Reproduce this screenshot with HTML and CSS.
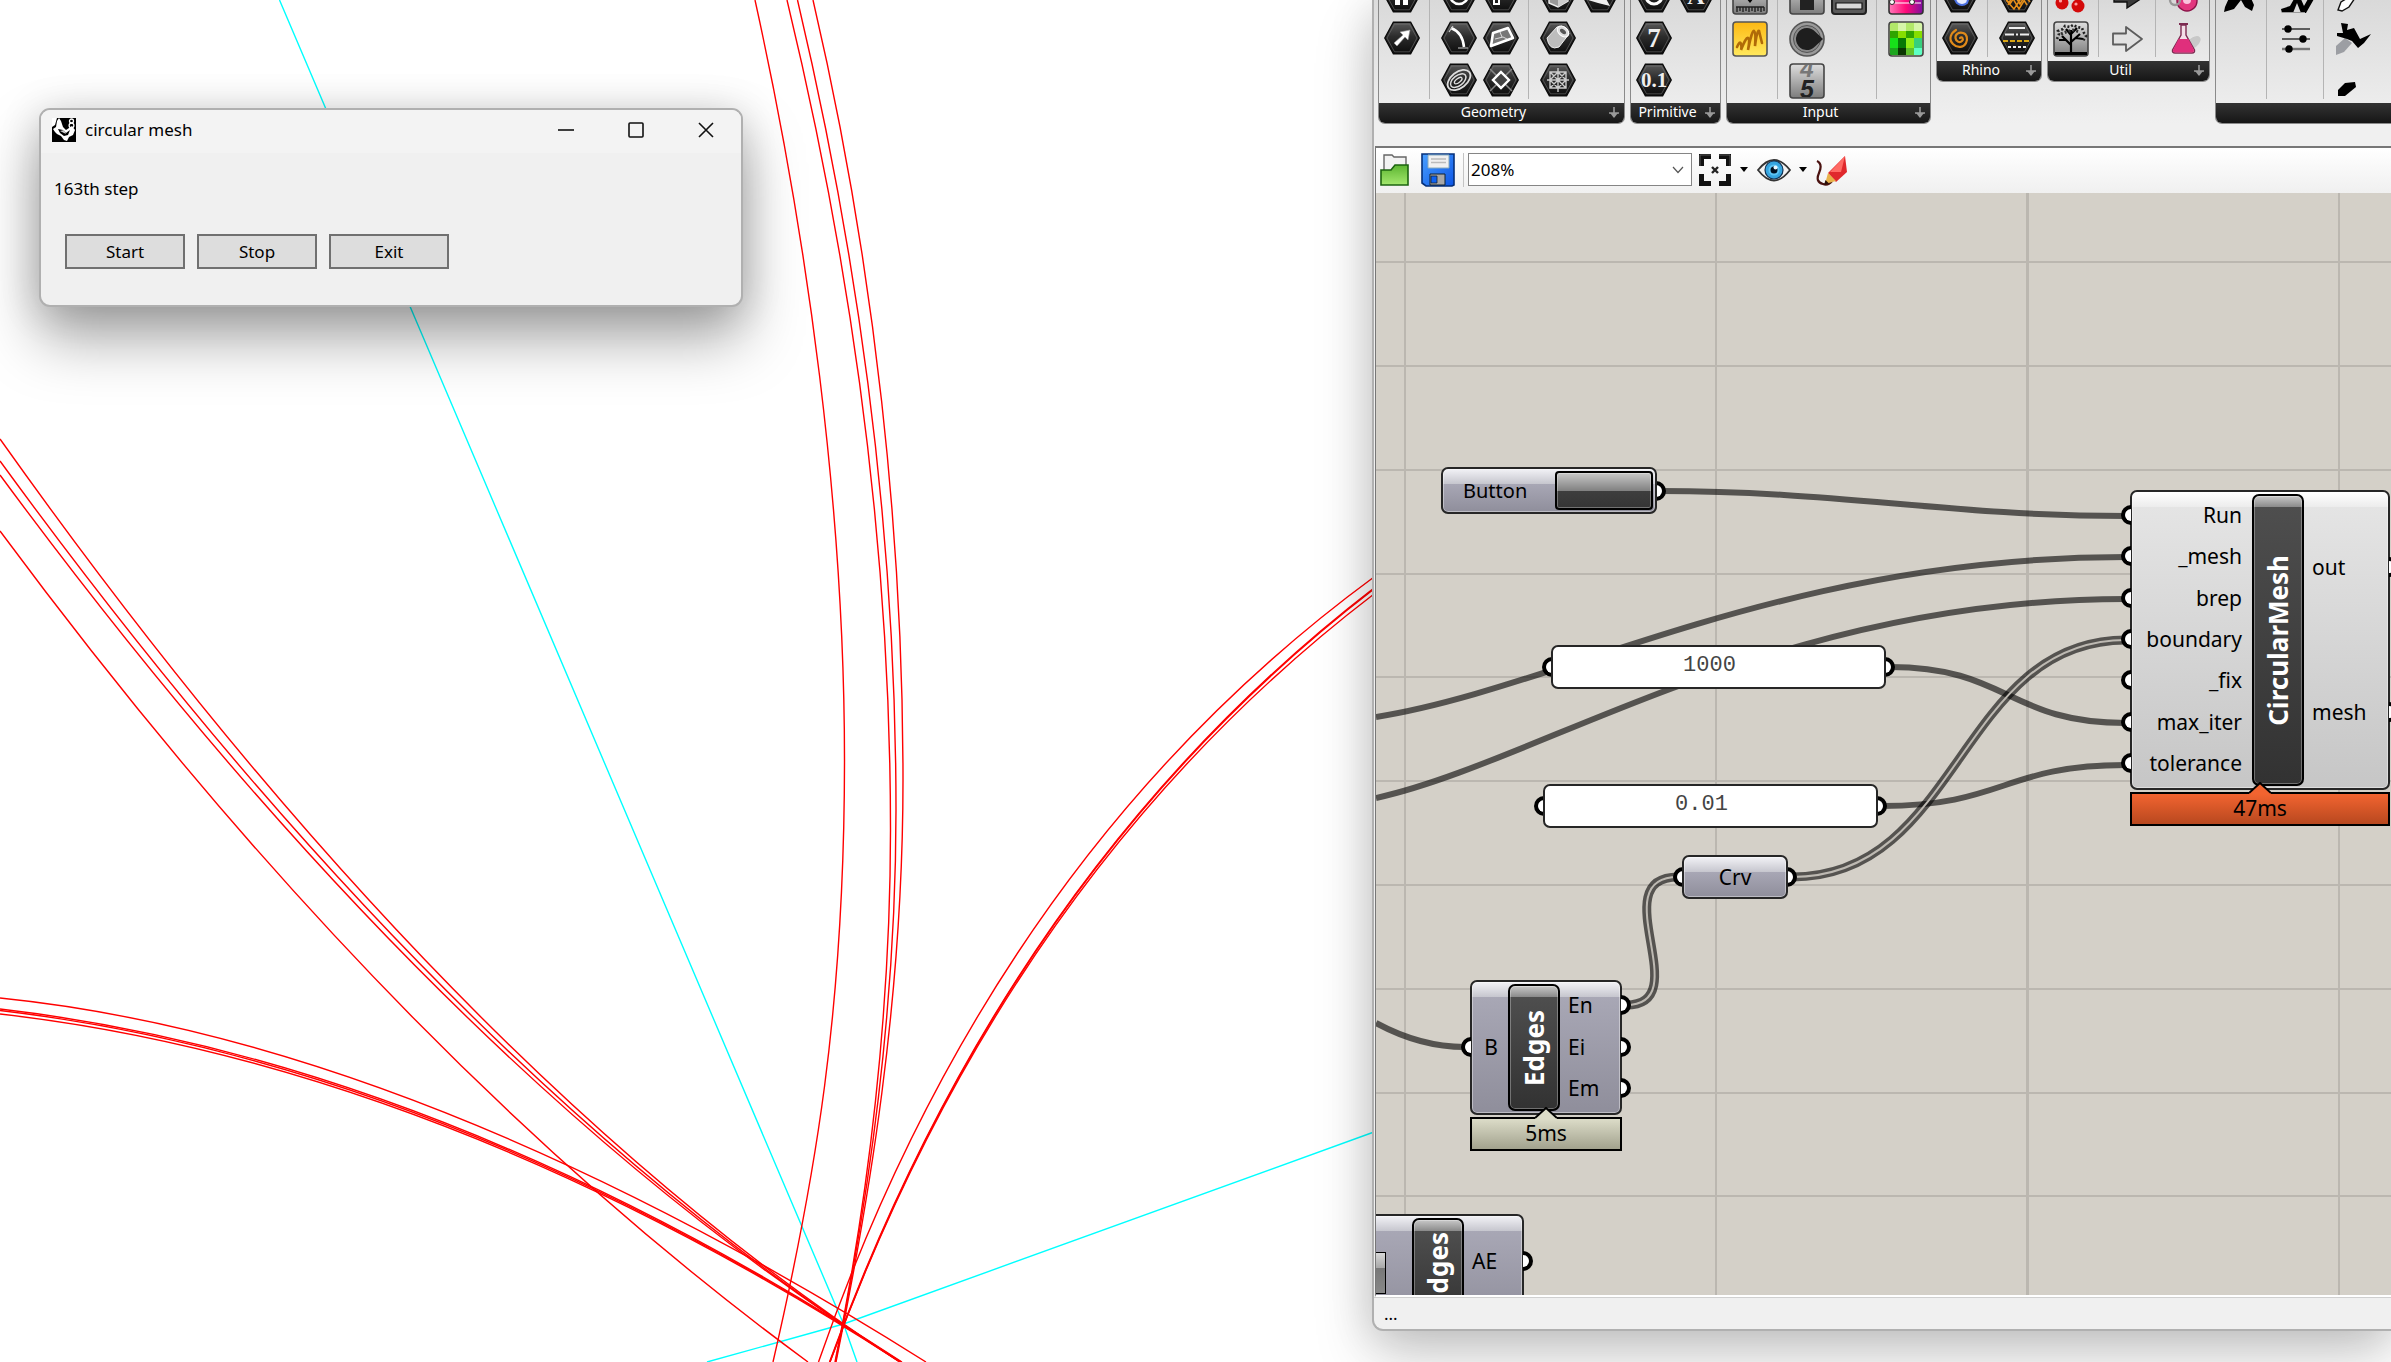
FILE: index.html
```html
<!DOCTYPE html>
<html lang="en">
<head>
<meta charset="utf-8">
<title>circular mesh</title>
<link rel="stylesheet" href="styles.css">
</head>
<body>
<svg class="defs" width="0" height="0" aria-hidden="true">
  <defs>
    <linearGradient id="gHex" x1="0" y1="0" x2="0" y2="1"><stop offset="0" stop-color="#5a5a5a"/><stop offset=".45" stop-color="#2c2c2c"/><stop offset="1" stop-color="#0c0c0c"/></linearGradient>
    <linearGradient id="gSteel" x1="0" y1="0" x2="0" y2="1"><stop offset="0" stop-color="#dedede"/><stop offset="1" stop-color="#7c7c7c"/></linearGradient>
    <linearGradient id="gYellow" x1="0" y1="0" x2="0" y2="1"><stop offset="0" stop-color="#fdb813"/><stop offset="1" stop-color="#ffe95e"/></linearGradient>
    <linearGradient id="gPink" x1="0" y1="0" x2="1" y2="0"><stop offset="0" stop-color="#ff7ab8"/><stop offset=".5" stop-color="#ff0a78"/><stop offset="1" stop-color="#7a10a0"/></linearGradient>
    <linearGradient id="gGreen" x1="0" y1="0" x2="0" y2="1"><stop offset="0" stop-color="#5cb531"/><stop offset="1" stop-color="#a4e86e"/></linearGradient>
    <linearGradient id="gBlue" x1="0" y1="0" x2="1" y2="1"><stop offset="0" stop-color="#4aa0ff"/><stop offset="1" stop-color="#0c55e6"/></linearGradient>
    <symbol id="hex" viewBox="0 0 36 36">
      <path d="M.8 17 9.400 1.200H26.600L35.200 17 26.600 32.800H9.400Z" fill="url(#gHex)" stroke="#0b0b0b" stroke-width="1.400"/>
      <path d="M3 17 10.500 3.200H25.500L33 17 25.500 30.800H10.500Z" fill="none" stroke="#777" stroke-opacity=".55" stroke-width="1"/>
    </symbol>
    <symbol id="more" viewBox="0 0 12 12"><path d="M6 0V10M1 6H11" stroke="#999" stroke-width="1.600"/><path d="M2 6H10L6 11Z" fill="#999"/></symbol>
  </defs>
</svg>

<main class="desktop">
  <svg class="viewport" aria-hidden="true">
    <g class="guide">
      <path d="M279.500 0 843.500 1324 857 1362"/>
      <path d="M707 1362 843.500 1324 1374 1132"/>
    </g>
    <g class="mesh">
      <path d="M0 439Q445 1066 900 1362"/><path d="M0 461Q445 1072 900 1362"/><path d="M0 475Q445 1078 901 1362"/><path d="M0 531Q386 1052 808 1362"/>
      <path d="M0 998Q414 1040 926 1362"/><path d="M0 1009Q438 1060 902 1362"/><path d="M0 1010.500Q438 1062 901 1362"/><path d="M0 1014Q438 1064 900 1362"/>
      <path d="M755 0C808 240 844.500 510 844.500 760S815 1180 773 1362"/>
      <path d="M787 0C857 290 890.500 570 890.500 830C890.500 1010 869 1195 835 1362"/>
      <path d="M797.500 0C866 290 896 560 896 810C896 1010 869 1195 835.500 1362"/>
      <path d="M813 0C876 270 903 540 903 780C903 1000 869 1200 836 1362"/>
      <path d="M818.500 1362Q994 856 1374 577"/><path d="M829.500 1362Q1009 869 1374 588"/><path d="M830 1362Q1009 870 1374 589"/><path d="M830 1362Q1009 873 1374 594"/>
    </g>
  </svg>

  <section class="window dialog" aria-label="circular mesh">
    <header class="titlebar">
      <svg class="app-icon" viewBox="0 0 24 24" aria-hidden="true"><path fill="#000" d="M0 0h24v24H0z"/><path fill="#fff" d="M1 11 4 9 5 3 7 0 9 3 11 9 14 12 20 8 23 12 21 17 17 19 15 23 12 22 9 18 5 16 3 14Z"/><path fill="#000" d="M6 11 11 12 14 15 18 12 16 17 12 18 8 15Z"/><path fill="#ccc" d="m8 13 4-1 2 4z"/><path fill="#fff" d="M0 0h5L3 7 0 9z"/><g fill="none" stroke="#fff" stroke-width="1.300"><circle cx="19.500" cy="3" r="2"/><circle cx="19.500" cy="7.500" r="2.400"/></g></svg>
      <h1 class="title">circular mesh</h1>
      <button class="caption" type="button" aria-label="Minimize"><svg viewBox="0 0 16 16"><path d="M0 8H16"/></svg></button>
      <button class="caption" type="button" aria-label="Maximize"><svg viewBox="0 0 16 16"><rect x="1" y="1" width="14" height="14" rx="1"/></svg></button>
      <button class="caption" type="button" aria-label="Close"><svg viewBox="0 0 16 16"><path d="M1 1 15 15M15 1 1 15"/></svg></button>
    </header>
    <div class="dialog-body">
      <p class="step">163th step</p>
      <div class="actions">
        <button class="push" type="button">Start</button>
        <button class="push" type="button">Stop</button>
        <button class="push" type="button">Exit</button>
      </div>
    </div>
  </section>

  <section class="window editor" aria-label="Grasshopper">
    <div class="ribbon">
      <section class="panel">
        <div class="tools">
          <div class="group">
            <svg viewBox="0 0 36 36"><use href="#hex"/><path d="M11 21h5v5h-5zM19 21h5v5h-5z" fill="#fff"/></svg>
            <svg viewBox="0 0 36 36"><use href="#hex"/><path d="m10 22 9-8-3-3 10-2-2 10-3-3-8 9Z" fill="#fff" stroke="#999" stroke-width=".6"/></svg>
            <span></span>
          </div>
          <div class="group two">
            <svg viewBox="0 0 36 36"><use href="#hex"/><circle cx="18" cy="16" r="9" fill="none" stroke="#fff" stroke-width="2.500"/></svg>
            <svg viewBox="0 0 36 36"><use href="#hex"/><path d="M11 20h5v5h-5zM14 20 20 8" fill="none" stroke="#fff" stroke-width="2"/></svg>
            <svg viewBox="0 0 36 36"><use href="#hex"/><path d="M10 7C18 10 22 16 23 26" fill="none" stroke="#fff" stroke-width="2.600"/><path d="M17 27H27M8 11 12 5" stroke="#ccc" stroke-width="1.200"/></svg>
            <svg viewBox="0 0 36 36"><use href="#hex"/><path d="M10 12 25 7 30 17 8 25Z" fill="#777" stroke="#fff" stroke-width="2.600" stroke-linejoin="round"/><path d="m17 11 2 5M12 18l8-2 4 2" fill="none" stroke="#ddd"/></svg>
            <svg viewBox="0 0 36 36"><use href="#hex"/><g fill="none" stroke="#ddd" transform="rotate(-38 18 17)"><ellipse cx="18" cy="17" rx="13" ry="8" stroke-width="1.800"/><ellipse cx="17" cy="17" rx="9" ry="5" stroke-width="1.500"/><ellipse cx="17" cy="17" rx="4.500" ry="2" stroke-width="1.400"/></g></svg>
            <svg viewBox="0 0 36 36"><use href="#hex"/><path d="M7 6 29 28M29 6 7 28" stroke="#888" stroke-width="1.500"/><path d="M18 9 26 17 18 25 10 17Z" fill="#444" stroke="#fff" stroke-width="2.400"/></svg>
          </div>
          <div class="group two">
            <svg viewBox="0 0 36 36"><use href="#hex"/><path d="M9 10 18 13 28 9V22L18 28 9 24Z" fill="#999" stroke="#eee" stroke-width="1.400"/><path d="M18 13V28L28 22V9Z" fill="#ccc"/></svg>
            <svg viewBox="0 0 36 36"><use href="#hex"/><path d="M6 21 22 16 28 27 16 24Z" fill="#eee"/></svg>
            <svg viewBox="0 0 36 36"><use href="#hex"/><path d="M7 17 17 6Q27 3 29 13L19 26Q9 30 7 17Z" fill="#bdbdbd" stroke="#eee"/><ellipse cx="23" cy="10.500" rx="6.500" ry="4.500" fill="#ddd" stroke="#fff" transform="rotate(40 23 10.500)"/><ellipse cx="23" cy="10.500" rx="3.500" ry="2" fill="#555" transform="rotate(40 23 10.500)"/></svg>
            <span></span>
            <svg viewBox="0 0 36 36"><use href="#hex"/><g fill="none" stroke="#ccc" stroke-width="1.400"><path d="M10 9h16v16H10zM18 5v24M7 17h22M10 9 26 25M26 9 10 25M18 9 26 17 18 25 10 17Z"/></g></svg>
            <span></span>
          </div>
        </div>
        <footer class="caption-bar"><h2>Geometry</h2><svg><use href="#more"/></svg></footer>
      </section>

      <section class="panel">
        <div class="tools">
          <div class="group two">
            <svg viewBox="0 0 36 36"><use href="#hex"/><circle cx="18" cy="17" r="8" fill="none" stroke="#fff" stroke-width="3"/></svg>
            <svg viewBox="0 0 36 36"><use href="#hex"/><text class="glyph" x="18" y="25" font-size="24">A</text></svg>
            <svg viewBox="0 0 36 36"><use href="#hex"/><text class="glyph" x="18" y="26" font-size="27">7</text></svg>
            <span></span>
            <svg viewBox="0 0 36 36"><use href="#hex"/><text class="glyph" x="18" y="24" font-size="21">0.1</text></svg>
            <span></span>
          </div>
        </div>
        <footer class="caption-bar"><h2>Primitive</h2><svg><use href="#more"/></svg></footer>
      </section>

      <section class="panel">
        <div class="tools">
          <div class="group">
            <svg viewBox="0 0 36 36"><rect x="1" y="1" width="34" height="34" rx="3" fill="url(#gSteel)" stroke="#444" stroke-width="1.600"/><path d="M14 19 18 24 22 19Z"/><path d="M4 28H32M5 28v5M8 28v4M11 28v5M14 28v4M17 28v5M20 28v4M23 28v5M26 28v4M29 28v5M32 28v4" stroke="#222" stroke-width="1.400"/></svg>
            <svg viewBox="0 0 36 36"><rect x="1" y="1" width="34" height="34" rx="3" fill="url(#gYellow)" stroke="#555" stroke-width="1.600"/><path d="M5 26Q8 19 9 23T9 29Q14 16 16 17T16 29Q20 9 22 10T23 25Q25 9 27 10L30 22" fill="none" stroke="#b06a08" stroke-width="2.600" stroke-linecap="round"/></svg>
            <span></span>
          </div>
          <div class="group two">
            <svg viewBox="0 0 36 36"><rect x="1" y="1" width="34" height="34" rx="3" fill="url(#gSteel)" stroke="#444" stroke-width="1.600"/><path d="M11 10H25V31H11Z" fill="#222"/></svg>
            <svg viewBox="0 0 36 36"><rect x="1" y="1" width="34" height="34" rx="3" fill="#5a5a5a" stroke="#222" stroke-width="2"/><path d="M5 15H31V20H5ZM5 24H31V30H5Z" fill="#d8d8d8" stroke="#111" stroke-width="1.200"/></svg>
            <svg viewBox="0 0 36 36"><circle cx="18" cy="18" r="17" fill="#9a9a9a" stroke="#555" stroke-width="1.600"/><circle cx="18" cy="18" r="13.500" fill="#8a8a8a" stroke="#555"/><path d="M18 7A11 11 0 1 0 26 25.500L34 18 26 10.500A11 11 0 0 0 18 7Z" fill="#1e1e1e"/></svg>
            <span></span>
            <svg viewBox="0 0 36 36"><rect x="1" y="1" width="34" height="34" rx="3" fill="url(#gSteel)" stroke="#444" stroke-width="1.600"/><clipPath id="cDigit"><rect x="2" y="2" width="32" height="32"/></clipPath><g clip-path="url(#cDigit)"><text class="digit" x="18" y="14" font-size="24" fill="#777">4</text><text class="digit" x="18" y="35" font-size="25" fill="#222">5</text></g></svg>
            <span></span>
          </div>
          <div class="group">
            <svg viewBox="0 0 36 36"><rect x="1" y="1" width="34" height="34" rx="3" fill="url(#gPink)" stroke="#333" stroke-width="1.600"/><path d="M3 24H33" stroke="#fff"/><circle cx="4" cy="23" r="2.500" fill="#fff" stroke="#222"/><circle cx="24" cy="23" r="2.500" fill="#fff" stroke="#222"/></svg>
            <svg viewBox="0 0 36 36"><path d="M1 1h34v34H1z" fill="#d6f5a8"/><path fill="#8ddb2a" d="M18 2h8v8h-8zM2 2h8v8H2z" opacity=".5"/><path fill="#2fa400" d="M2 10h8v7H2zM18 10h8v7h-8z"/><path fill="#86de00" d="M10 10h8v7h-8zM26 10h8v7h-8z"/><path fill="#17e01a" d="M2 17h8v10H2z"/><path fill="#077a06" d="M10 17h8v10h-8z"/><path fill="#91ee18" d="M18 17h8v10h-8z"/><path fill="#37cf7d" d="M26 17h8v10h-8z"/><path fill="#1da51e" d="M2 27h8v7H2z"/><path fill="#0a3602" d="M10 27h8v7h-8z"/><path fill="#5fc22c" d="M18 27h8v7h-8z"/><path fill="#5effc4" d="M26 27h8v7h-8z"/><rect x="1" y="1" width="34" height="34" rx="3" fill="none" stroke="#444" stroke-width="1.600"/></svg>
            <span></span>
          </div>
        </div>
        <footer class="caption-bar"><h2>Input</h2><svg><use href="#more"/></svg></footer>
      </section>

      <section class="panel">
        <div class="tools">
          <div class="group">
            <svg viewBox="0 0 36 36"><use href="#hex"/><path d="M8 12 15 24Q20 28 25 24L28 15 18 6Z" fill="#e8ecff" stroke="#4a6fe0" stroke-width="2"/></svg>
            <svg viewBox="0 0 36 36"><use href="#hex"/><path d="M18 17C20 15 22 18 20 20S14 21 13.500 17 17 11 21 12 26 18 24 22 16 28 11 23 9 12 14 9" fill="none" stroke="#e08a1a" stroke-width="2.200" stroke-linecap="round"/></svg>
          </div>
          <div class="group">
            <svg viewBox="0 0 36 36"><use href="#hex"/><path d="m6 19 5 6 5-8 5 8 5-8 5 6M9 26l4-8 7 12 8-13M7 21 15 30 23 18 28 26" fill="none" stroke="#e8901a" stroke-width="1.500"/></svg>
            <svg viewBox="0 0 36 36"><use href="#hex"/><path d="M10 7H26" stroke="#eee" stroke-width="1.800"/><path d="M6 13.500H31" stroke="#eee" stroke-width="1.800" stroke-dasharray="9 2 2 2"/><path d="M4 20H32" stroke="#d9a514" stroke-width="2" stroke-dasharray="5 2"/><path d="M9 26H28" stroke="#eee" stroke-width="1.800" stroke-dasharray="3 2"/></svg>
          </div>
        </div>
        <footer class="caption-bar"><h2>Rhino</h2><svg><use href="#more"/></svg></footer>
      </section>

      <section class="panel">
        <div class="tools">
          <div class="group">
            <svg viewBox="0 0 36 36"><path d="M18 2Q8 12 10 22M18 2Q24 12 25 24" fill="none" stroke="#486b1e" stroke-width="2"/><circle cx="9" cy="24" r="6.500" fill="#d40a0a"/><circle cx="25" cy="27" r="6.500" fill="#d40a0a"/><circle cx="7.500" cy="22" r="1.600" fill="#ffa0a0"/><circle cx="23" cy="25" r="1.600" fill="#ffa0a0"/></svg>
            <svg viewBox="0 0 36 36"><rect x="1" y="1" width="34" height="34" rx="3" fill="url(#gSteel)" stroke="#444" stroke-width="1.600"/><path d="M2 31H34V34H2Z"/><path d="M18 32V20M18 24 9 15M18 21 27 13M18 20V9M13 19 6 19M23 17 30 18M18 14 13 8M18 13 24 7" stroke="#000" stroke-width="2.200"/><path d="M4 18 6 13 5 10 10 8 12 5 17 6 20 4 24 6 29 7 31 12 33 15 30 20" fill="none" stroke="#222" stroke-width="2.600" stroke-dasharray="2 2"/><path d="M8 13 13 11 20 9 27 11" stroke="#333" fill="none" stroke-width="3" stroke-dasharray="2 2"/></svg>
          </div>
          <div class="group">
            <svg viewBox="0 0 36 36"><path d="M4 14H17V8L32 19 17 29V23H4Z" fill="#3a3a3a" stroke="#111" stroke-width="1.400"/></svg>
            <svg viewBox="0 0 36 36"><path d="M3 12.500H16V6L32 18 16 30V23.500H3Z" fill="#e2e2e2" stroke="#5d5d5d" stroke-width="1.800" stroke-linejoin="round"/></svg>
          </div>
          <div class="group">
            <svg viewBox="0 0 36 36"><circle cx="20" cy="22" r="10" fill="#e2367e" stroke="#8c1248" stroke-width="1.400"/><circle cx="8" cy="21" r="5" fill="none" stroke="#999" stroke-width="2.400"/><circle cx="20" cy="21" r="4" fill="#f9c4dc"/></svg>
            <svg viewBox="0 0 36 36"><ellipse cx="26" cy="22" rx="9" ry="5" fill="#000" opacity=".12" transform="rotate(-40 26 22)"/><path d="M14 4V14L5.500 29Q5 32 8 32H25Q28 32 27.500 29L19 14V4Z" fill="#f3dfe8" stroke="#7c2a50" stroke-width="1.400"/><path d="M11.500 18H21.500L27 29Q27 31.500 25 31.500H8Q5.500 31.500 6 29Z" fill="#e02f7c"/><path d="M12 3H21" stroke="#7c2a50" stroke-width="2"/></svg>
          </div>
        </div>
        <footer class="caption-bar"><h2>Util</h2><svg><use href="#more"/></svg></footer>
      </section>

      <section class="panel last">
        <div class="tools">
          <div class="group">
            <svg viewBox="0 0 36 36"><path d="M12 10 19 20 26 10 33 26 31 32 24 28 20 21 13 30 3 33 4 28Z"/></svg>
            <span></span><span></span>
          </div>
          <div class="group">
            <svg viewBox="0 0 36 36"><path d="M8 20 16 20 12 27 3 30 4 34H15L19 24 23 34H28L36 20 30 20 26 27 22 18Z"/><path d="M4 33.500H27" stroke="#999"/></svg>
            <svg viewBox="0 0 36 36"><path d="M4 8H32M4 18H32" stroke="#333" stroke-width="1.400"/><path d="M4 28H32" stroke="#777" stroke-width="2.400"/><circle cx="10" cy="8" r="3.700"/><circle cx="25" cy="18" r="3.700"/><circle cx="11" cy="28" r="3.700"/></svg>
            <span></span>
          </div>
          <div class="group">
            <svg viewBox="0 0 36 36"><path d="M3 31 6 23 14 18 20 19 14 28 7 32Z" fill="#fff" stroke="#111" stroke-width="1.400"/></svg>
            <svg viewBox="0 0 36 36"><path d="M1 25 10 17 17 22 9 31 1 34Z" fill="#9c9ea3"/><path d="M6 2 13 3 12 9 19 7 25 18 36 13 29 22 23 27 17 20 12 18 2 15 2 12 8 12Z"/></svg>
            <svg viewBox="0 0 36 36"><path d="M3 33 3 27 10 20 20 19 21 24 10 33Z"/></svg>
          </div>
        </div>
        <footer class="caption-bar"></footer>
      </section>
    </div>

    <div class="workspace">
      <div class="toolbar">
        <button class="tool" type="button" aria-label="Open"><svg viewBox="0 0 34 34"><path d="M5 2H13L15 4H27V20H5Z" fill="#f2f2f2" stroke="#666" stroke-width="1.400"/><path d="M2 17H12L16 12H29V32H2Z" fill="url(#gGreen)" stroke="#1c6410" stroke-width="1.600"/></svg></button>
        <button class="tool" type="button" aria-label="Save"><svg viewBox="0 0 34 34"><path d="M1 1H33V32L31 33H5L1 30Z" fill="url(#gBlue)" stroke="#06307a" stroke-width="1.600"/><path d="M7 2H28V15H7Z" fill="#f0f0f0" stroke="#8ab"/><path d="M10 6H25M10 9.500H25" stroke="#bbb" stroke-width="1.500"/><path d="M9 21H24V32H9Z" fill="#a8a8a8" stroke="#123"/><path d="M10 23H16V30H10Z" fill="#0f62f0" stroke="#123" stroke-width=".8"/></svg></button>
        <span class="divider"></span>
        <div class="zoom">
          <select aria-label="Zoom"><option>208%</option></select>
          <svg viewBox="0 0 12 8" aria-hidden="true"><path d="M1 1 6 6.500 11 1" fill="none" stroke="#555" stroke-width="1.200"/></svg>
        </div>
        <button class="tool" type="button" aria-label="Zoom extents"><svg viewBox="0 0 34 34"><path d="M3.500 13V3.500H13M21 3.500H30.500V13M30.500 21V30.500H21M13 30.500H3.500V21" fill="none" stroke="#111" stroke-width="5"/><path d="M2 13V2H13M21 2H32V13" fill="none" stroke="#666" stroke-width=".8"/><path d="M14 14 20 20M20 14 14 20" stroke="#222" stroke-width="2.400"/></svg></button>
        <svg class="drop" viewBox="0 0 8 5"><path d="M0 0H8L4 5Z"/></svg>
        <button class="tool" type="button" aria-label="Preview"><svg viewBox="0 0 34 34"><path d="M1 17Q17 -3 33 17Q17 38 1 17Z" fill="#f2f2f2" stroke="#333" stroke-width="1.800"/><circle cx="17" cy="17" r="9" fill="#35a5e0" stroke="#135" stroke-width="1.200"/><circle cx="17" cy="17" r="5.500" fill="#5cc4f4"/><circle cx="17" cy="17" r="3.500" fill="#012"/><circle cx="18.500" cy="14.500" r="2" fill="#e8f8ff"/></svg></button>
        <svg class="drop" viewBox="0 0 8 5"><path d="M0 0H8L4 5Z"/></svg>
        <button class="tool" type="button" aria-label="Sketch"><svg viewBox="0 0 34 34"><path d="M1 8Q7 11 3 20T7 31Q12 33 16 28" fill="none" stroke="#4a1210" stroke-width="2.200"/><path d="M12 20 29 3 31 19 20 29Z" fill="#e0282c"/><path d="M14 19 29 3 25 19Z" fill="#ff6a64"/><path d="M9 31 12 20 20 28Z" fill="#e8b24a"/><path d="M8 32 9.500 27 13 30.500Z" fill="#2a1008"/></svg></button>
      </div>

      <div class="canvas">
        <svg class="wires" aria-hidden="true">
          <g transform="translate(-1376 -193)">
            <g class="grid">
              <path d="M1405 193V1400M1716 193V1400M2339 193V1400"/><path class="major" d="M2027.500 193V1400"/>
              <path d="M1376 262H2600M1376 366H2600M1376 470H2600M1376 574H2600M1376 677H2600M1376 781H2600M1376 885H2600M1376 989H2600M1376 1093H2600M1376 1196H2600"/>
            </g>
            <g class="wire">
              <path d="M1660 491C1840 491 1948 516 2126 516"/>
              <path d="M1376 717C1560 688 1780 557 2126 557"/>
              <path d="M1376 798C1540 762 1775 599 2126 599"/>
              <path d="M1890 667C2008 667 2008 723 2126 723"/>
              <path d="M1882 806C2004 806 2004 765 2126 765"/>
              <path d="M1376 1023C1400 1036 1430 1047 1465 1047"/>
            </g>
            <g class="wire double">
              <path d="M1626 1005C1698 1005 1602 877 1678 877"/>
              <path d="M1792 877C1960 877 1959 640 2126 640"/>
            </g>
            <g class="core">
              <path d="M1626 1005C1698 1005 1602 877 1678 877"/>
              <path d="M1792 877C1960 877 1959 640 2126 640"/>
            </g>
          </g>
        </svg>

        <div class="node n-button">
          <i class="grip out"></i>
          <div class="face toggle"><span>Button</span><button class="press" type="button" aria-label="Button"></button></div>
        </div>

        <div class="node n-iter"><i class="grip in"></i><i class="grip out"></i><div class="face note">1000</div></div>
        <div class="node n-tol"><i class="grip in"></i><i class="grip out"></i><div class="face note">0.01</div></div>
        <div class="node n-crv"><i class="grip in"></i><i class="grip out"></i><div class="face param">Crv</div></div>

        <div class="node n-mesh">
          <div class="face light">
            <ul class="ports left"><li>Run</li><li>_mesh</li><li>brep</li><li>boundary</li><li>_fix</li><li>max_iter</li><li>tolerance</li></ul>
            <div class="name"><span>CircularMesh</span></div>
            <ul class="ports right"><li>out</li><li>mesh</li></ul>
          </div>
          <div class="timer slow"><svg viewBox="0 0 22 12"><path d="M0 11 11 1 22 11V12H0Z"/><path class="edge" d="M0 11 11 1 22 11"/></svg>47ms</div>
        </div>

        <div class="node n-edges">
          <div class="face">
            <ul class="ports left"><li>B</li></ul>
            <div class="name"><span>Edges</span></div>
            <ul class="ports right"><li>En</li><li>Ei</li><li>Em</li></ul>
          </div>
          <div class="timer"><svg viewBox="0 0 22 12"><path d="M0 11 11 1 22 11V12H0Z"/><path class="edge" d="M0 11 11 1 22 11"/></svg>5ms</div>
        </div>

        <div class="node n-angle">
          <div class="face">
            <div class="swatch"></div>
            <div class="name"><span>Edges</span></div>
            <ul class="ports right"><li>AE</li></ul>
          </div>
        </div>
      </div>
    </div>
    <footer class="status">...</footer>
  </section>
</main>
</body>
</html>
```
FILE: styles.css
```css
*, *::after { box-sizing: border-box; }

body {
  margin: 0;
  background: #fff;
  color: #000;
  font: 17px/24px "Noto Sans", "Open Sans", sans-serif;
}

h1, h2, p, ul { margin: 0; padding: 0; font-weight: 400; list-style: none; }
button, select { font: inherit; color: inherit; }
.defs { position: absolute; }

.desktop {
  position: relative;
  height: 100vh;
  overflow: hidden;
}

.viewport { display: block; width: 100%; height: 100%; }
.viewport path { fill: none; stroke-width: 1.4; }
.mesh { stroke: #f00; }
.guide { stroke: #0ff; }

.window {
  position: absolute;
  background: #f0f0f0;
}

/* progress dialog */
.dialog {
  left: 39px;
  top: 108px;
  width: 704px;
  border: 2px solid #b0b0b0;
  border-radius: 11px;
  box-shadow: 0 32px 60px rgba(0, 0, 0, .34), 0 4px 40px rgba(0, 0, 0, .16);
}

.titlebar {
  display: flex;
  align-items: center;
  height: 43px;
  padding: 0 0 3px 11px;
  background: #f3f3f3;
  border-radius: 9px 9px 0 0;
}

.app-icon { width: 24px; height: 24px; }
.title { flex: 1; margin-left: 9px; font-size: 17px; }

.caption {
  display: grid;
  place-items: center;
  width: 70px;
  height: 40px;
  padding: 0;
  border: 0;
  background: none;
}

.caption svg { width: 16px; height: 16px; fill: none; stroke: #111; stroke-width: 1.6; }

.dialog-body { padding: 24px 24px 36px; }
.step { margin: 0 0 33px -11px; }
.actions { display: flex; gap: 12px; }

.push {
  width: 120px;
  height: 35px;
  padding: 0;
  border: 2px solid #707070;
  background: #ddd;
}

/* node editor window */
.editor {
  left: 1372px;
  right: 0;
  top: 0;
  bottom: 31px;
  display: flex;
  flex-direction: column;
  border: solid #b0b0b0;
  border-width: 0 0 2px 2px;
  border-radius: 0 0 0 11px;
  box-shadow: 0 26px 60px rgba(0, 0, 0, .18), 0 4px 44px rgba(0, 0, 0, .14);
}

.ribbon {
  display: flex;
  align-items: flex-start;
  gap: 5px;
  height: 146px;
  padding-left: 4px;
  overflow: hidden;
  background: linear-gradient(#dcdcdc, #f0f0f0 124px);
}

.panel {
  flex: none;
  overflow: hidden;
  border: 1px solid #8a8a8a;
  border-top: 0;
  border-radius: 0 0 7px 7px;
  background: linear-gradient(#d9d9d9, #f0f0f0);
}

.panel.last { flex: 1; border-right: 0; border-bottom-right-radius: 0; }
.tools { display: flex; margin-top: -21px; padding: 0 6px 4px 5px; }

.group {
  display: grid;
  grid-template-columns: 36px;
  grid-auto-rows: 36px;
  gap: 6px;
}

.group.two { grid-template-columns: 36px 36px; }
.group > svg { width: 36px; height: 36px; }

.group + .group {
  margin-left: 9px;
  padding-left: 11px;
  border-left: 1px solid #b4b4b4;
}

.glyph { fill: #eee; font-family: "Liberation Serif", serif; font-weight: 700; text-anchor: middle; }
.digit { font-family: "Liberation Sans", sans-serif; font-style: italic; font-weight: 700; text-anchor: middle; }

.caption-bar {
  display: flex;
  align-items: flex-start;
  height: 20px;
  padding-right: 4px;
  background: linear-gradient(#333, #161616);
  color: #fff;
}

.caption-bar h2 { flex: 1; font-size: 14px; line-height: 18px; text-align: center; }
.caption-bar svg { width: 12px; height: 12px; margin-top: 4px; }

.workspace {
  flex: 1;
  min-height: 0;
  display: flex;
  flex-direction: column;
  margin-left: 1px;
  border-top: 2px solid #777;
  border-left: 1px solid #777;
  border-bottom: 2px solid #fff;
}

.toolbar {
  display: flex;
  align-items: center;
  height: 45px;
  padding: 0 0 2px 3px;
  background: linear-gradient(#fff, #f0f0f0);
}

.tool {
  width: 34px;
  height: 34px;
  padding: 0;
  border: 0;
  background: none;
}

.tool svg { display: block; width: 34px; height: 34px; }
.tool + .tool { margin-left: 8px; }
.divider { width: 1px; height: 34px; margin: 0 4px 0 8px; background: #c4c4c4; }
.zoom { position: relative; margin-right: 6px; }

.zoom select {
  appearance: none;
  display: block;
  width: 224px;
  height: 33px;
  padding: 0 4px 0 2px;
  border: 1px solid #858585;
  border-radius: 0;
  background: #fff;
}

.zoom svg { position: absolute; right: 8px; top: 13px; width: 12px; height: 8px; }
.drop { width: 8px; height: 5px; margin: 0 9px 0 8px; }

.canvas {
  position: relative;
  flex: 1;
  min-height: 0;
  overflow: hidden;
  background: #d4d0c8;
  font-size: 21px;
  line-height: 28px;
}

.wires { display: block; width: 100%; height: 100%; fill: none; }
.grid { stroke: #bbb7b0; stroke-width: 2; }
.grid .major { stroke-width: 3; }
.wire { stroke: rgba(0, 0, 0, .6); stroke-width: 6; }
.wire.double { stroke-width: 9; }
.core { stroke: #bdb9b2; stroke-width: 2; }

.node { position: absolute; }
.n-button { left: 65px; top: 274px; width: 216px; height: 47px; }
.n-iter { left: 175px; top: 452px; width: 335px; height: 44px; }
.n-tol { left: 167px; top: 591px; width: 335px; height: 44px; }
.n-crv { left: 306px; top: 662px; width: 106px; height: 44px; }
.n-mesh { left: 754px; top: 297px; width: 260px; }
.n-edges { left: 94px; top: 787px; width: 152px; }
.n-angle { left: -20px; top: 1021px; width: 168px; }

.face {
  position: relative;
  display: flex;
  width: 100%;
  height: 100%;
  border: 2px solid #262626;
  border-radius: 7px;
  background: linear-gradient(#f2f2f6, #c6c6ce 15px, #a8a7b5 15px, #8f8e9b);
  box-shadow: inset 0 0 0 1px rgba(255, 255, 255, .4);
}

.face.light { background: linear-gradient(#fff, #ececec 15px, #e4e4e4 15px, #c6c6c6); }
.n-mesh .face { height: 300px; }
.n-edges .face { height: 135px; }
.n-angle .face { height: 112px; }

.face.toggle { align-items: center; justify-content: space-between; padding: 0 2px 0 20px; font-size: 20px; }

.press {
  width: 98px;
  height: 39px;
  border: 2px solid #000;
  border-radius: 4px;
  background: linear-gradient(#c8c8c8, #828282 50%, #3e3e3e 50%, #353535);
  box-shadow: inset 0 0 0 1px rgba(255, 255, 255, .3);
}

.face.note {
  justify-content: center;
  padding: 5px 18px 0 0;
  background: #fff;
  color: #444;
  font: 22px/28px "Liberation Mono", monospace;
}

.face.param { align-items: center; justify-content: center; padding-bottom: 1px; }

.ports { display: flex; flex-direction: column; flex: 1; padding: 2px 0 4px; }
.ports li { display: flex; flex: 1; align-items: center; position: relative; }
.ports.left { text-align: right; }
.ports.left li { justify-content: flex-end; padding-right: 10px; }
.ports.right li { padding-left: 8px; }
.n-edges .left { flex: 0 0 36px; }
.n-mesh .left { flex: 0 0 120px; }
.n-angle .ports { padding-bottom: 20px; }

.name {
  display: grid;
  place-items: center;
  flex: none;
  width: 52px;
  margin: 2px 0;
  border: 2px solid #000;
  border-radius: 7px;
  background: linear-gradient(#c8c8c8, #8a8a8a 11px, #4e4e4e 11px, #323232);
  box-shadow: inset 0 0 0 1px rgba(255, 255, 255, .3);
  color: #fff;
  font-size: 26px;
  font-weight: 700;
}

.name span { writing-mode: vertical-rl; rotate: 180deg; }

.swatch {
  width: 28px;
  height: 42px;
  margin: 36px 26px 0 0;
  border: 1px solid #000;
  background: linear-gradient(#d8d8d8, #a8a8a8 15px, #787878 15px, #888);
}

/* half-round connection grips on the node edge */
.grip,
.ports li::after {
  content: "";
  position: absolute;
  top: calc(50% - 10px);
  width: 10px;
  height: 20px;
  border: 4px solid #000;
  background: #fff;
}

.grip.in, .left li::after { left: -9px; border-right: 0; border-radius: 10px 0 0 10px; }
.grip.out, .right li::after { right: -9px; border-left: 0; border-radius: 0 10px 10px 0; }
.ports.left li::after { left: -11px; }
.ports.right li::after { right: -11px; }

.timer {
  position: relative;
  height: 34px;
  margin-top: 2px;
  border: 2px solid #000;
  background: linear-gradient(#dcdcc8, #a2a28e);
  line-height: 29px;
  text-align: center;
}

.timer svg {
  position: absolute;
  left: calc(50% - 11px);
  top: -12px;
  width: 22px;
  height: 12px;
  fill: #dcdcc8;
}

.timer .edge { fill: none; stroke: #000; stroke-width: 2; }
.timer.slow { background: linear-gradient(#f26430, #b8481f); }
.timer.slow svg { fill: #f26430; }

.status {
  height: 32px;
  padding: 4px 0 0 10px;
  border-top: 1px solid #d0d0d0;
  font-size: 17px;
}
```
